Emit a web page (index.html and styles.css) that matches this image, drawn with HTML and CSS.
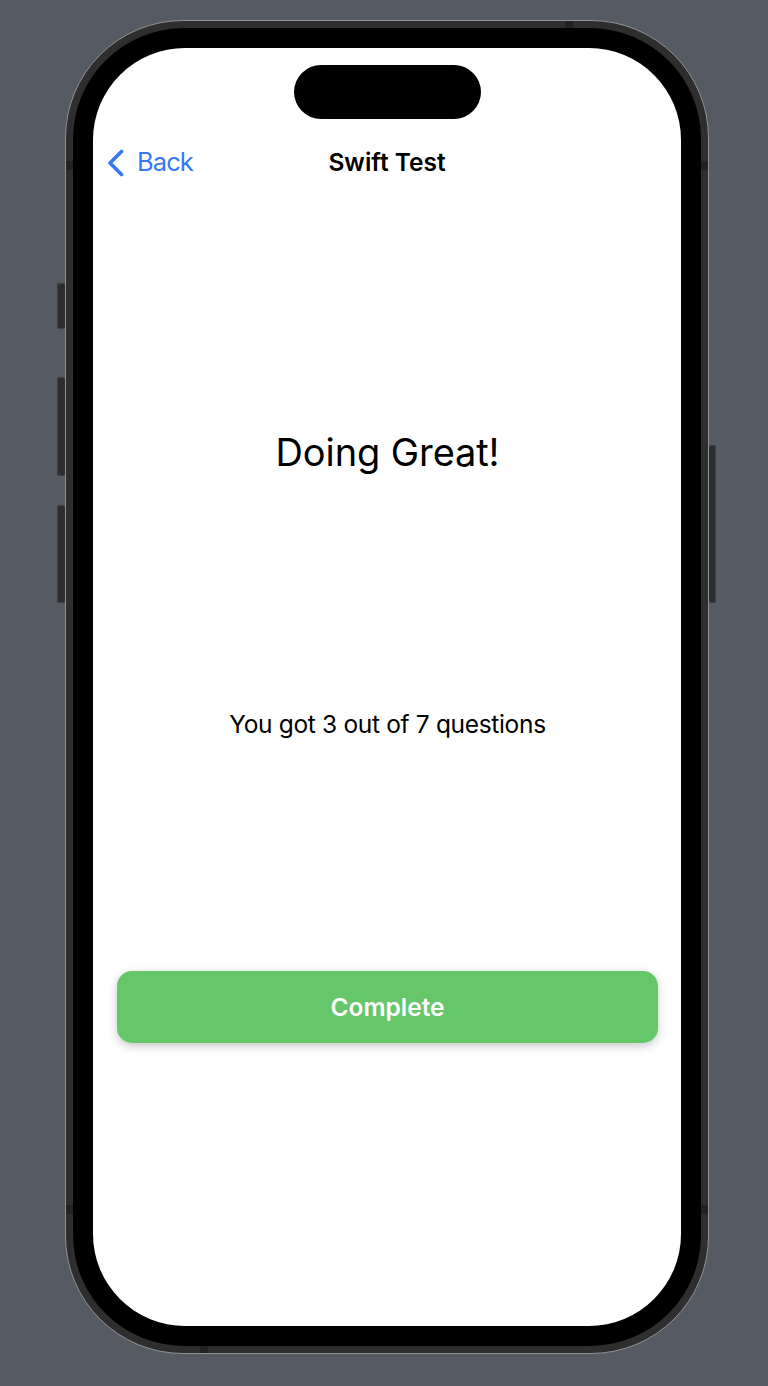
FILE: index.html
```html
<!DOCTYPE html>
<html lang="en">
<head>
<meta charset="utf-8">
<title>Swift Test</title>
<link rel="stylesheet" href="styles.css">
</head>
<body>
<div class="device">
  <span class="side-btn side-left btn-action"></span>
  <span class="side-btn side-left btn-vol-up"></span>
  <span class="side-btn side-left btn-vol-down"></span>
  <span class="side-btn side-right btn-power"></span>
  <span class="band-mark mark-left-top"></span>
  <span class="band-mark mark-right-top"></span>
  <span class="band-mark mark-left-bottom"></span>
  <span class="band-mark mark-right-bottom"></span>
  <span class="band-mark mark-top"></span>
  <span class="band-mark mark-bottom"></span>
  <div class="frame">
    <div class="bezel">
      <div class="screen">
        <div class="island"></div>
        <nav class="navbar">
          <a class="back" href="#">
            <svg class="chevron" width="19" height="28" viewBox="0 0 19 28" aria-hidden="true">
              <polyline points="15.5,2.5 4,14 15.5,25.5" fill="none" stroke="currentColor" stroke-width="3.6" stroke-linecap="round" stroke-linejoin="round"/>
            </svg>
            <span class="back-label">Back</span>
          </a>
          <h1 class="nav-title">Swift Test</h1>
        </nav>
        <main class="content">
          <h2 class="result-title">Doing Great!</h2>
          <p class="result-text">You got 3 out of 7 questions</p>
          <button class="complete-btn" type="button">Complete</button>
        </main>
      </div>
    </div>
  </div>
</div>
</body>
</html>
```

FILE: styles.css
```css
* { box-sizing: border-box; }

html, body {
  margin: 0;
  background: #565b63;
}

body {
  padding: 20px 0 0 65px;
  font-family: Inter, "Noto Sans", "Liberation Sans", sans-serif;
  height: 1386px;
  overflow: hidden;
}

.device {
  position: relative;
  width: 644px;
  height: 1334px;
}

.frame {
  width: 644px;
  height: 1334px;
  border: 1px solid #8f9296;
  background: #2e2e2e;
  border-radius: 118px;
  padding: 7px;
}

.bezel {
  height: 100%;
  background: #000;
  border-radius: 111px;
  padding: 20px;
}

.screen {
  height: 100%;
  background: #fff;
  border-radius: 92px;
  padding-top: 17px;
  display: flex;
  flex-direction: column;
  overflow: hidden;
}

.island {
  align-self: center;
  width: 187px;
  height: 54px;
  border-radius: 27px;
  background: #000;
  flex: none;
}

.navbar {
  margin-top: 10px;
  height: 66px;
  flex: none;
  display: grid;
  grid-template-columns: 1fr auto 1fr;
  align-items: center;
  padding: 0 13px;
}

.back {
  grid-column: 1;
  grid-row: 1;
  justify-self: start;
  display: flex;
  align-items: center;
  color: #3478f6;
  text-decoration: none;
  font-size: 25.5px;
  letter-spacing: -0.9px;
}

.chevron {
  display: block;
  margin-right: 12px;
  margin-top: 1px;
}

.back-label {
  line-height: 30px;
}

.nav-title {
  grid-column: 2;
  grid-row: 1;
  margin: 0;
  font-size: 24.5px;
  font-weight: 600;
  color: #000;
  letter-spacing: 0;
  line-height: 30px;
}

.content {
  flex: 1;
  display: flex;
  flex-direction: column;
  align-items: center;
  padding: 0 23px 0 24px;
}

.result-title {
  margin: 234px 0 0;
  font-size: 38px;
  font-weight: 400;
  line-height: 46px;
  color: #000;
  letter-spacing: -0.1px;
}

.result-text {
  margin: 234px 0 0;
  font-size: 24.5px;
  line-height: 31px;
  color: #000;
  letter-spacing: -0.33px;
}

.complete-btn {
  margin-top: 231px;
  width: 100%;
  height: 72px;
  border: none;
  border-radius: 15px;
  background: #66c66a;
  color: #fff;
  font-family: inherit;
  font-size: 24.5px;
  font-weight: 600;
  letter-spacing: 0;
  box-shadow: 0 3px 10px rgba(0, 0, 0, 0.22);
}

/* hardware decoration */
.side-btn {
  position: absolute;
  background: #2d2d2d;
  border: 1px solid #3d3f43;
  border-radius: 2px;
}

.side-left { left: -8px; width: 8px; border-right: none; }
.side-right { left: 644px; width: 7px; border-left: none; }

.btn-action { top: 263px; height: 46px; }
.btn-vol-up { top: 357px; height: 99px; }
.btn-vol-down { top: 485px; height: 98px; }
.btn-power { top: 425px; height: 158px; }

.band-mark {
  position: absolute;
  background: #222;
}

.mark-left-top { left: 1px; top: 141px; width: 7px; height: 9px; }
.mark-right-top { left: 636px; top: 141px; width: 7px; height: 9px; }
.mark-left-bottom { left: 1px; top: 1185px; width: 7px; height: 9px; }
.mark-right-bottom { left: 636px; top: 1185px; width: 7px; height: 9px; }
.mark-top { left: 500px; top: 1px; width: 8px; height: 7px; }
.mark-bottom { left: 135px; top: 1326px; width: 8px; height: 7px; }
```
